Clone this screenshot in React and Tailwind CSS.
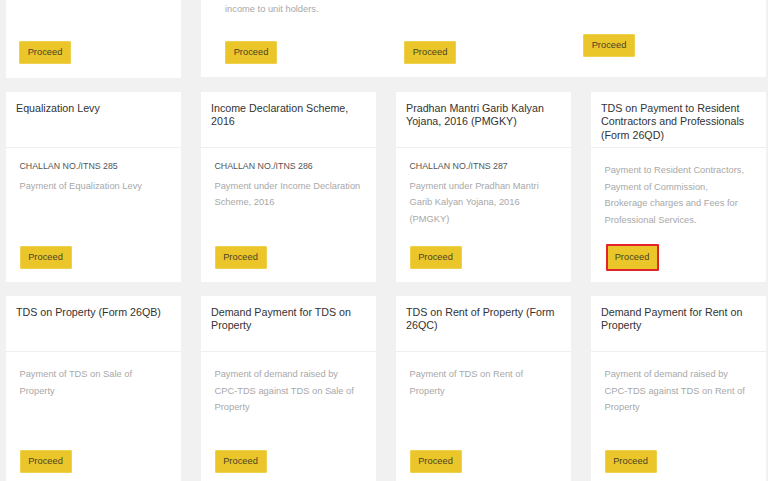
import React from "react";

const cards = [
  {
    title: "Equalization Levy",
    challan: "CHALLAN NO./ITNS 285",
    desc: "Payment of Equalization Levy",
  },
  {
    title: "Income Declaration Scheme, 2016",
    challan: "CHALLAN NO./ITNS 286",
    desc: "Payment under Income Declaration Scheme, 2016",
  },
  {
    title: "Pradhan Mantri Garib Kalyan Yojana, 2016 (PMGKY)",
    challan: "CHALLAN NO./ITNS 287",
    desc: "Payment under Pradhan Mantri Garib Kalyan Yojana, 2016 (PMGKY)",
  },
  {
    title: "TDS on Payment to Resident Contractors and Professionals (Form 26QD)",
    desc: "Payment to Resident Contractors, Payment of Commission, Brokerage charges and Fees for Professional Services.",
    highlight: true,
  },
  {
    title: "TDS on Property (Form 26QB)",
    desc: "Payment of TDS on Sale of Property",
  },
  {
    title: "Demand Payment for TDS on Property",
    desc: "Payment of demand raised by CPC-TDS against TDS on Sale of Property",
  },
  {
    title: "TDS on Rent of Property (Form 26QC)",
    desc: "Payment of TDS on Rent of Property",
  },
  {
    title: "Demand Payment for Rent on Property",
    desc: "Payment of demand raised by CPC-TDS against TDS on Rent of Property",
  },
];

function ProceedButton({ highlight = false, className = "" }) {
  return (
    <button
      className={
        "bg-[#ebc62a] rounded-[1px] text-[9.3px] text-[#4a4326] leading-none flex items-center justify-center shrink-0 " +
        (highlight
          ? "w-[53px] h-[27px] border-2 border-[#e3232a] -my-[2px] ml-[1px] "
          : "w-[52px] h-[23px] border border-[#efd04f] ") +
        className
      }
    >
      Proceed
    </button>
  );
}

function Card({ title, challan, desc, highlight }) {
  return (
    <div className="bg-white h-[190px] flex flex-col">
      <div className="h-[56px] border-b border-[#efefef] px-[10px] pt-[10px] shrink-0">
        <div className="text-[10.7px] leading-[13.3px] text-[#333333]">{title}</div>
      </div>
      <div className="flex flex-col flex-1 pl-[13.5px] pr-[13px] pt-[14px] pb-[13px]">
        {challan && (
          <div className="text-[8.8px] leading-[9px] text-[#555555] mb-[6.5px]">{challan}</div>
        )}
        <div className="text-[9.3px] leading-[16.7px] text-[#a8a8a8]">{desc}</div>
        <div className="mt-auto">
          <ProceedButton highlight={highlight} />
        </div>
      </div>
    </div>
  );
}

export default function App() {
  return (
    <div
      className="w-[768px] h-[481px] overflow-hidden bg-[#f1f1f1] pl-[6px]"
      style={{ fontFamily: '"Liberation Sans", Arial, sans-serif' }}
    >
      <div className="grid grid-cols-[175px_175px_175px_175px] gap-x-[20px] gap-y-[14px]">
        <div className="bg-white h-[78px] flex flex-col justify-end pl-[13px] pb-[14px]">
          <ProceedButton />
        </div>
        <div className="col-span-3 bg-white h-[77px] flex flex-col pl-[24px]">
          <div className="text-[9.3px] leading-[16.7px] text-[#a8a8a8] mt-[1px]">
            income to unit holders.
          </div>
          <div className="mt-auto mb-[13px] flex items-end gap-[127px]">
            <ProceedButton />
            <ProceedButton />
            <ProceedButton className="mb-[7px]" />
          </div>
        </div>
        {cards.map((c, i) => (
          <Card key={i} {...c} />
        ))}
      </div>
    </div>
  );
}
